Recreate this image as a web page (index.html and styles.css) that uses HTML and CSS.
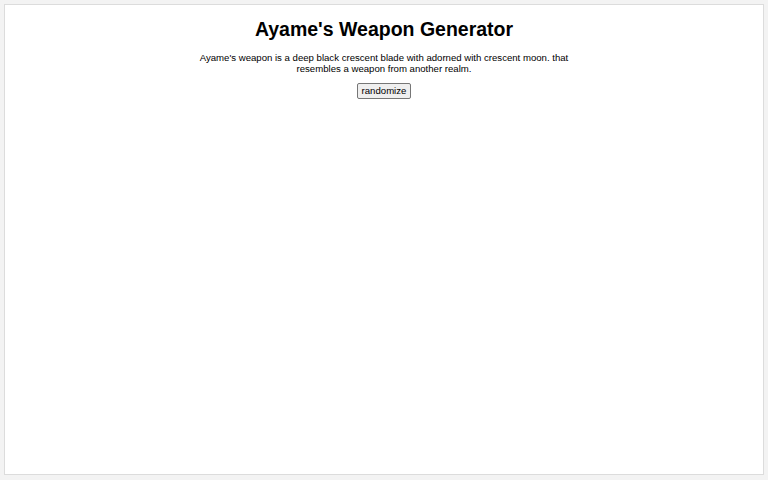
FILE: index.html
```html
<!DOCTYPE html>
<html lang="en">
<head>
    <meta charset="UTF-8">
    <meta name="viewport" content="width=device-width, initial-scale=1.0">
    <title>Ayame's Weapon Generator</title>
    <link rel="stylesheet" href="styles.css">
</head>
<body>
    <div class="card">
        <h1>Ayame's Weapon Generator</h1>
        <p class="weapon">Ayame's weapon is a deep black crescent blade with adorned with crescent moon. that resembles a weapon from another realm.</p>
        <button class="randomize">randomize</button>
    </div>
</body>
</html>
```

FILE: styles.css
```css
* {
    box-sizing: border-box;
}

html, body {
    height: 100%;
}

body {
    margin: 0;
    padding: 4px 4px 5px 4px;
    background-color: #f3f3f3;
    font-family: "Liberation Sans", Arial, sans-serif;
    color: #000;
}

.card {
    height: 100%;
    background-color: #fff;
    border: 1px solid #dcdcdc;
    display: flex;
    flex-direction: column;
    align-items: center;
    padding-top: 13px;
}

h1 {
    margin: 0;
    font-size: 19.5px;
    font-weight: bold;
}

.weapon {
    margin: 11px 0 0 0;
    max-width: 380px;
    font-size: 9.6px;
    line-height: 11px;
    text-align: center;
}

.randomize {
    margin-top: 9px;
    font-family: "Liberation Sans", Arial, sans-serif;
    font-size: 9.6px;
    line-height: 11px;
    padding: 1px 4px 2px 4px;
    background-color: #efefef;
    border: 1px solid #767676;
    border-radius: 2px;
}
```
